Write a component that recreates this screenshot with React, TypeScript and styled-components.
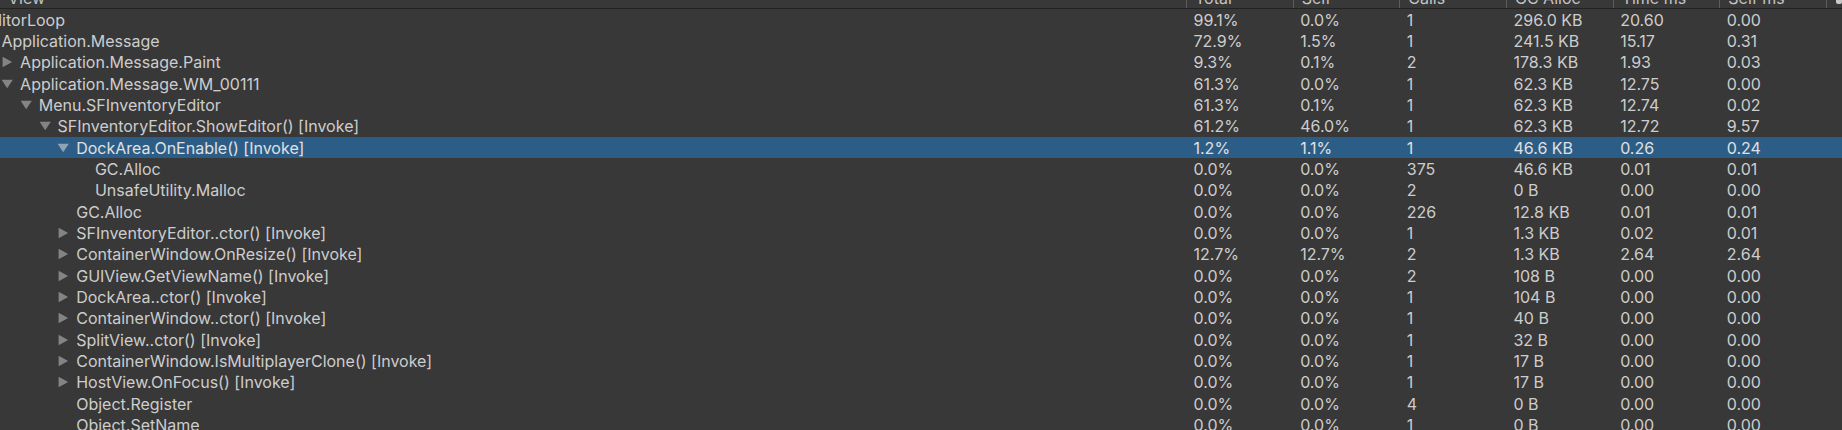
import { FC } from "react";
import styled, { createGlobalStyle } from "styled-components";

const GlobalStyle = createGlobalStyle`
  html, body {
    margin: 0;
    padding: 0;
    background: #383838;
    overflow: hidden;
  }
`;

const COLS = "1186px repeat(6, 106.67px) 1fr";

const Panel = styled.div`
  width: 1842px;
  height: 430px;
  overflow: hidden;
  background: #383838;
  color: #cdcdcd;
  font-family: Inter, "Noto Sans", sans-serif;
  font-size: 16px;
`;

const Header = styled.div`
  display: grid;
  grid-template-columns: ${COLS};
  height: 21px;
  margin-top: -13px;
  border-bottom: 1.5px solid #222222;
  color: #c4c4c4;
`;

const HeadCell = styled.div<{ $sep?: boolean }>`
  display: flex;
  align-items: center;
  padding-left: 8px;
  border-left: ${p => (p.$sep ? "1px solid #5c5c5c" : "none")};
  white-space: nowrap;
  overflow: hidden;
`;

const MenuIcon = styled.div`
  width: 12px;
  height: 14px;
  margin-left: 9px;
  margin-top: 3px;
  border-radius: 2px;
  background: #c8c8c8;
  align-self: flex-start;
`;

const Row = styled.div<{ $selected?: boolean }>`
  display: grid;
  grid-template-columns: ${COLS};
  height: 21.33px;
  background: ${p => (p.$selected ? "#2c5d87" : "transparent")};
  color: ${p => (p.$selected ? "#e0e0e0" : "#cdcdcd")};
`;

const NameCell = styled.div`
  overflow: hidden;
  display: flex;
  align-items: center;
  white-space: nowrap;
`;

const NameInner = styled.div<{ $depth: number }>`
  display: flex;
  align-items: center;
  margin-left: ${p => p.$depth * 18.7 - 36.3}px;
`;

const ArrowSlot = styled.span`
  display: flex;
  align-items: center;
  width: 19px;
  height: 14px;
  flex: none;
`;

const ArrowSvg = styled.svg`
  display: block;
  flex: none;
  width: 12px;
  height: 12px;
`;

const Cell = styled.div`
  display: flex;
  align-items: center;
  padding-left: 7.5px;
  white-space: nowrap;
`;

const Arrow: FC<{ open: boolean; selected?: boolean }> = ({ open, selected }) => (
  <ArrowSvg viewBox="0 0 12 12">
    <polygon
      points={open ? "0.6,1.8 11.8,1.8 6.2,10.3" : "1.6,0.8 11.1,6 1.6,11.2"}
      fill={selected ? "#8fa3b6" : "#848484"}
    />
  </ArrowSvg>
);

type Item = {
  name: string;
  depth: number;
  arrow?: "open" | "closed";
  values: string[];
  selected?: boolean;
};

const rows: Item[] = [
  { name: "EditorLoop", depth: 0, arrow: "open", values: ["99.1%", "0.0%", "1", "296.0 KB", "20.60", "0.00"] },
  { name: "Application.Message", depth: 1, arrow: "open", values: ["72.9%", "1.5%", "1", "241.5 KB", "15.17", "0.31"] },
  { name: "Application.Message.Paint", depth: 2, arrow: "closed", values: ["9.3%", "0.1%", "2", "178.3 KB", "1.93", "0.03"] },
  { name: "Application.Message.WM_00111", depth: 2, arrow: "open", values: ["61.3%", "0.0%", "1", "62.3 KB", "12.75", "0.00"] },
  { name: "Menu.SFInventoryEditor", depth: 3, arrow: "open", values: ["61.3%", "0.1%", "1", "62.3 KB", "12.74", "0.02"] },
  { name: "SFInventoryEditor.ShowEditor() [Invoke]", depth: 4, arrow: "open", values: ["61.2%", "46.0%", "1", "62.3 KB", "12.72", "9.57"] },
  { name: "DockArea.OnEnable() [Invoke]", depth: 5, arrow: "open", selected: true, values: ["1.2%", "1.1%", "1", "46.6 KB", "0.26", "0.24"] },
  { name: "GC.Alloc", depth: 6, values: ["0.0%", "0.0%", "375", "46.6 KB", "0.01", "0.01"] },
  { name: "UnsafeUtility.Malloc", depth: 6, values: ["0.0%", "0.0%", "2", "0 B", "0.00", "0.00"] },
  { name: "GC.Alloc", depth: 5, values: ["0.0%", "0.0%", "226", "12.8 KB", "0.01", "0.01"] },
  { name: "SFInventoryEditor..ctor() [Invoke]", depth: 5, arrow: "closed", values: ["0.0%", "0.0%", "1", "1.3 KB", "0.02", "0.01"] },
  { name: "ContainerWindow.OnResize() [Invoke]", depth: 5, arrow: "closed", values: ["12.7%", "12.7%", "2", "1.3 KB", "2.64", "2.64"] },
  { name: "GUIView.GetViewName() [Invoke]", depth: 5, arrow: "closed", values: ["0.0%", "0.0%", "2", "108 B", "0.00", "0.00"] },
  { name: "DockArea..ctor() [Invoke]", depth: 5, arrow: "closed", values: ["0.0%", "0.0%", "1", "104 B", "0.00", "0.00"] },
  { name: "ContainerWindow..ctor() [Invoke]", depth: 5, arrow: "closed", values: ["0.0%", "0.0%", "1", "40 B", "0.00", "0.00"] },
  { name: "SplitView..ctor() [Invoke]", depth: 5, arrow: "closed", values: ["0.0%", "0.0%", "1", "32 B", "0.00", "0.00"] },
  { name: "ContainerWindow.IsMultiplayerClone() [Invoke]", depth: 5, arrow: "closed", values: ["0.0%", "0.0%", "1", "17 B", "0.00", "0.00"] },
  { name: "HostView.OnFocus() [Invoke]", depth: 5, arrow: "closed", values: ["0.0%", "0.0%", "1", "17 B", "0.00", "0.00"] },
  { name: "Object.Register", depth: 5, values: ["0.0%", "0.0%", "4", "0 B", "0.00", "0.00"] },
  { name: "Object.SetName", depth: 5, values: ["0.0%", "0.0%", "1", "0 B", "0.00", "0.00"] },
];

const columns = ["Total", "Self", "Calls", "GC Alloc", "Time ms", "Self ms"];

export default function App(): JSX.Element {
  return (
    <>
      <GlobalStyle />
      <Panel>
        <Header>
          <HeadCell>View</HeadCell>
          {columns.map(c => (
            <HeadCell key={c} $sep>
              {c}
            </HeadCell>
          ))}
          <HeadCell $sep style={{ padding: 0 }}>
            <MenuIcon />
          </HeadCell>
        </Header>
        {rows.map((r, i) => (
          <Row key={i} $selected={r.selected}>
            <NameCell>
              <NameInner $depth={r.depth}>
                <ArrowSlot>
                  {r.arrow && <Arrow open={r.arrow === "open"} selected={r.selected} />}
                </ArrowSlot>
                {r.name}
              </NameInner>
            </NameCell>
            {r.values.map((v, j) => (
              <Cell key={j}>{v}</Cell>
            ))}
            <div />
          </Row>
        ))}
      </Panel>
    </>
  );
}
